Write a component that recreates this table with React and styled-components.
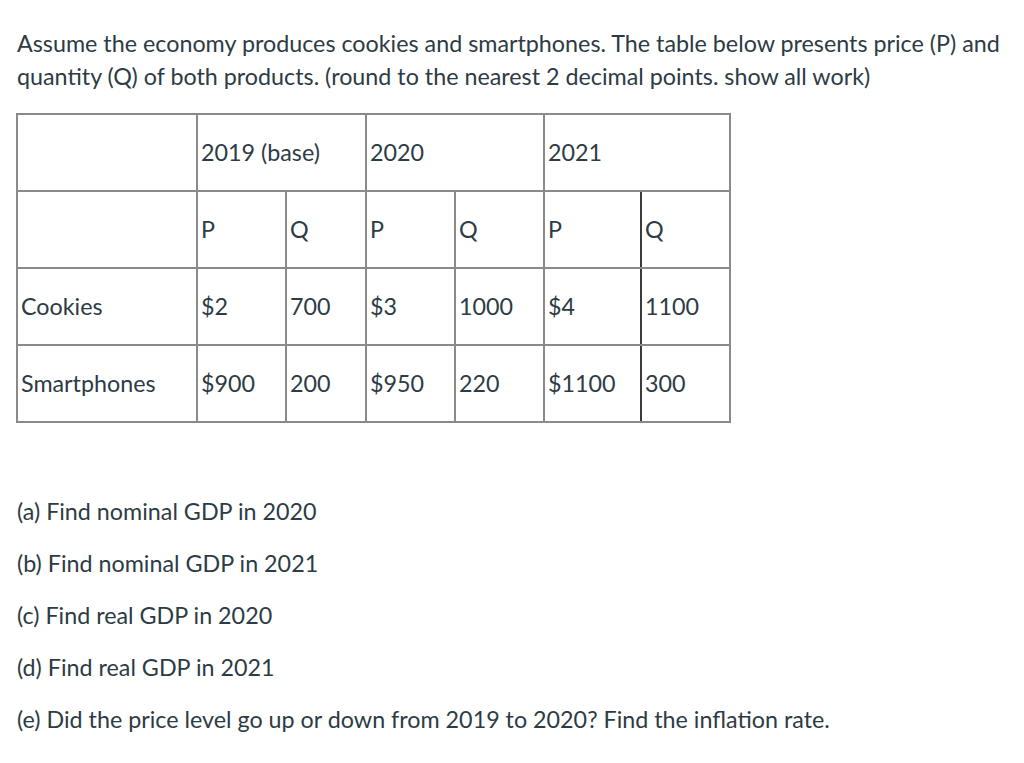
import React from "react";
import styled, { createGlobalStyle } from "styled-components";

const GlobalStyle = createGlobalStyle`
  body {
    margin: 0;
    background: #ffffff;
  }
`;

const Page = styled.div`
  padding: 27px 16px 0 17px;
  font-family: Lato, "Open Sans", sans-serif;
  font-size: 23.3px;
  line-height: 33px;
  color: #2d3b45;
`;

const Intro = styled.p`
  margin: 0 0 20px 0;
`;

const Table = styled.table`
  border-collapse: collapse;
  table-layout: fixed;
  width: 713px;
  margin-left: -1px;
  border: 2px solid #8a8a8a;
`;

const Cell = styled.td`
  height: 75px;
  padding: 0 3px;
  border: 2px solid #8a8a8a;
  ${(p) => p.$dark && "border-right-color: #3a3a3a;"}
  vertical-align: middle;
  text-align: left;
  white-space: nowrap;
`;

const Questions = styled.div`
  margin-top: 72px;
  display: flex;
  flex-direction: column;
  gap: 19px;
`;

const Question = styled.p`
  margin: 0;
`;

const colWidths = [180, 89, 80, 89, 89, 97, 89];

const rows = [
  ["Cookies", "$2", "700", "$3", "1000", "$4", "1100"],
  ["Smartphones", "$900", "200", "$950", "220", "$1100", "300"],
];

const questions = [
  "(a) Find nominal GDP in 2020",
  "(b) Find nominal GDP in 2021",
  "(c) Find real GDP in 2020",
  "(d) Find real GDP in 2021",
  "(e) Did the price level go up or down from 2019 to 2020? Find the inflation rate.",
];

const App = () => {
  return (
    <Page>
      <GlobalStyle />
      <Intro>
        Assume the economy produces cookies and smartphones. The table below
        presents price (P) and quantity (Q) of both products. (round to the
        nearest 2 decimal points. show all work)
      </Intro>
      <Table>
        <colgroup>
          {colWidths.map((w, i) => (
            <col key={i} style={{ width: w }} />
          ))}
        </colgroup>
        <tbody>
          <tr>
            <Cell />
            <Cell colSpan={2}>2019 (base)</Cell>
            <Cell colSpan={2}>2020</Cell>
            <Cell colSpan={2}>2021</Cell>
          </tr>
          <tr>
            <Cell />
            <Cell>P</Cell>
            <Cell>Q</Cell>
            <Cell>P</Cell>
            <Cell>Q</Cell>
            <Cell $dark>P</Cell>
            <Cell>Q</Cell>
          </tr>
          {rows.map((row) => (
            <tr key={row[0]}>
              {row.map((v, i) => (
                <Cell key={i} $dark={i === 5}>
                  {v}
                </Cell>
              ))}
            </tr>
          ))}
        </tbody>
      </Table>
      <Questions>
        {questions.map((q) => (
          <Question key={q}>{q}</Question>
        ))}
      </Questions>
    </Page>
  );
};

export default App;
